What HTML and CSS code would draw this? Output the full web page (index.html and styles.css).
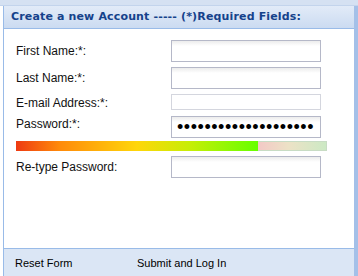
FILE: index.html
```html
<!DOCTYPE html>
<html lang="en">
<head>
	<meta charset="UTF-8">
	<title>Create a new Account</title>
	<link rel="stylesheet" href="styles.css">
</head>
<body>
<div class="top-strip"></div>
<div class="panel">
	<div class="panel-header">Create a new Account ----- (*)Required Fields:</div>
	<form class="panel-body">
		<div class="row">
			<label class="lbl">First Name:*:</label>
			<input class="field" type="text">
		</div>
		<div class="row">
			<label class="lbl">Last Name:*:</label>
			<input class="field" type="text">
		</div>
		<div class="row">
			<label class="lbl">E-mail Address:*:</label>
			<input class="field field-mail" type="text">
		</div>
		<div class="row row-pass">
			<label class="lbl">Password:*:</label>
			<input class="field field-pass" type="password" value="passwordpassword1234">
		</div>
		<div class="strength">
			<div class="strength-fill" style="width: 242px"></div>
		</div>
		<div class="row">
			<label class="lbl">Re-type Password:</label>
			<input class="field" type="password">
		</div>
	</form>
	<div class="panel-footer">
		<span class="btn btn-reset">Reset Form</span>
		<span class="btn">Submit and Log In</span>
	</div>
</div>
</body>
</html>
```

FILE: styles.css
```css
html,body{
	margin: 0;
	padding: 0;
	background: #fff;
	width: 358px;
	height: 276px;
	overflow: hidden;
	font-family: "Liberation Sans", Arial, sans-serif;
}
.top-strip{
	height: 5px;
	background: #d5e1f2;
	border-bottom: 1px solid #c3d4ec;
}
.panel{
	margin-left: 3px;
	height: 270px;
	border-left: 1px solid #99bbe8;
	border-right: 4px solid #a4c0e8;
	display: flex;
	flex-direction: column;
}
.panel-header{
	height: 22px;
	line-height: 22px;
	padding-left: 7px;
	border-bottom: 1px solid #99bbe8;
	background: linear-gradient(#e2ebf8, #cbdbf1);
	color: #15428b;
	font-family: "DejaVu Sans", Verdana, sans-serif;
	font-weight: bold;
	font-size: 11px;
	letter-spacing: 0.15px;
	white-space: nowrap;
}
.panel-body{
	flex: 1;
	margin: 0;
	padding: 11px 0 0 12px;
	background: #fff;
}
.row{
	display: flex;
	align-items: center;
	margin-bottom: 5px;
}
.row-pass{
	align-items: flex-start;
	margin-bottom: 3px;
}
.row-pass .lbl{
	padding-top: 1px;
}
.lbl{
	width: 155px;
	font-size: 12px;
	color: #111;
}
.field{
	box-sizing: border-box;
	width: 150px;
	height: 22px;
	margin: 0;
	padding: 0 5px;
	border: 1px solid #b5b8c8;
	background: #fff linear-gradient(#ececec, #fff 5px);
	outline: none;
}
.field-mail{
	height: 16px;
	border-color: #d4d6de;
	background: #fff;
	margin-bottom: 1px;
}
.field-pass{
	font-family: "Liberation Sans", sans-serif;
	font-size: 18px;
	letter-spacing: 0.55px;
	color: #000;
}
.strength{
	width: 311px;
	height: 10px;
	margin-bottom: 5px;
	background: linear-gradient(to right, #f4c6c6 77%, #ece2c6 88%, #cce9c4);
	border: 1px solid #c8dcc4;
	box-sizing: border-box;
}
.strength-fill{
	height: 100%;
	margin: -1px 0 0 -1px;
	padding-bottom: 2px;
	background: linear-gradient(to right, #ee3a12, #ff8a0a 18%, #ffd60a 50%, #c6ee06 72%, #66ff00 100%);
}
.panel-footer{
	height: 27px;
	border-top: 1px solid #99bbe8;
	background: #dbe6f5;
	display: flex;
	align-items: center;
	padding-left: 11px;
	font-size: 11px;
	color: #000;
}
.btn-reset{
	width: 122px;
}
```
